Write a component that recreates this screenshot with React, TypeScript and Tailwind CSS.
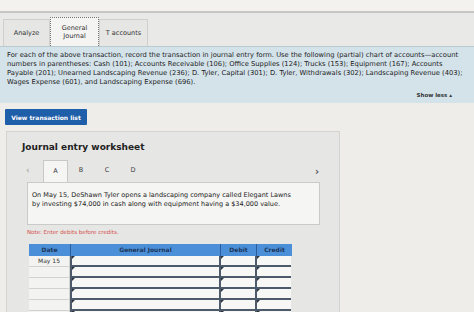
import React from "react";

const font = { fontFamily: '"DejaVu Sans", Verdana, sans-serif' };

function Row({ date }: { date?: string }) {
  return (
    <div className="flex h-[11px]">
      <div className="w-[41px] border-r border-b border-[#d2d2d0] bg-[#f3f3f1] text-center text-[6px] leading-[10px] text-[#333]">
        {date ?? ""}
      </div>
      {[149, 36, 36].map((w, i) => (
        <div
          key={i}
          className="relative border-l-2 border-b-2 border-[#4d5a6a] bg-[#f7f7f5]"
          style={{ width: w }}
        >
          <div className="absolute left-0 top-0 h-0 w-0 border-t-[3px] border-r-[3px] border-t-[#2a3440] border-r-transparent" />
        </div>
      ))}
    </div>
  );
}

export default function App() {
  return (
    <div className="relative h-[312px] w-[474px] overflow-hidden bg-[#eeede9] text-[#222]" style={font}>
      <div className="h-[13px] border-b-2 border-[#c6c6c4] bg-[#f3f2ef]" />
      <div className="flex h-[33px] items-end bg-[#e9e9e7] pl-[3px]">
        <div className="flex h-[27px] w-[47px] items-center justify-center border border-b-0 border-[#cfcfcd] bg-[#e6e6e4] pt-[2px] text-[6.5px] text-[#333]">
          Analyze
        </div>
        <div className="flex h-[29px] w-[49px] items-center justify-center border border-dotted border-b-0 border-[#777] bg-[#f4f4f2] text-center text-[6.5px] leading-[8px] text-[#333]">
          General<br />Journal
        </div>
        <div className="flex h-[27px] w-[49px] items-center justify-center border border-b-0 border-[#cfcfcd] bg-[#e6e6e4] pt-[2px] text-[6.5px] text-[#333]">
          T accounts
        </div>
      </div>
      <div className="h-[57px] border-t border-[#b9c9d2] bg-[#d4e3ea] px-[7px] pt-[4px]">
        <p className="whitespace-nowrap text-[6.75px] leading-[9px] text-[#222]">
          For each of the above transaction, record the transaction in journal entry form. Use the following (partial) chart of accounts—account<br />
          numbers in parentheses: Cash (101); Accounts Receivable (106); Office Supplies (124); Trucks (153); Equipment (167); Accounts<br />
          Payable (201); Unearned Landscaping Revenue (236); D. Tyler, Capital (301); D. Tyler, Withdrawals (302); Landscaping Revenue (403);<br />
          Wages Expense (601), and Landscaping Expense (696).
        </p>
        <div className="mt-[4px] flex justify-end pr-[15px] text-[5.5px] font-bold text-[#333]">
          Show less ▴
        </div>
      </div>
      <div className="pl-[5px] pt-[6px]">
        <div className="flex h-[16px] w-[82px] items-center justify-center rounded-[1px] bg-[#1f5ea8] text-[6px] font-bold text-white">
          View transaction list
        </div>
      </div>
      <div className="ml-[6px] mt-[6px] h-[200px] w-[334px] border border-[#d3d3d1] bg-[#e6e6e4]">
        <div className="pl-[15px] pt-[9px] text-[9px] font-bold leading-[12px] text-[#222]">
          Journal entry worksheet
        </div>
        <div className="mt-[7px] flex h-[22px] items-end">
          <div className="flex h-[22px] w-[36px] items-center pl-[19px] text-[9px] text-[#999]">‹</div>
          <div className="flex h-[22px] w-[25px] items-center justify-center border border-b-0 border-[#c8c8c6] bg-[#f5f5f3] text-[6.5px] text-[#333]">A</div>
          {["B", "C", "D"].map((t) => (
            <div key={t} className="flex h-[22px] w-[26px] items-center justify-center text-[6.5px] text-[#444]">{t}</div>
          ))}
          <div className="flex-1" />
          <div className="flex h-[22px] w-[24px] items-center text-[10px] font-bold text-[#555]">›</div>
        </div>
        <div className="ml-[20px] h-[43px] w-[293px] border border-[#cacac8] bg-[#f5f5f3] px-[4px] pt-[8px] text-[6.5px] leading-[9px] text-[#222]">
          On May 15, DeShawn Tyler opens a landscaping company called Elegant Lawns<br />
          by investing $74,000 in cash along with equipment having a $34,000 value.
        </div>
        <div className="ml-[20px] mt-[3px] text-[5.5px] leading-[8px] text-[#d4524e]">
          Note: Enter debits before credits.
        </div>
        <div className="ml-[22px] mt-[8px] w-[263px]">
          <div className="flex h-[12px] bg-[#4a8fd8] text-[6px] font-bold leading-[12px] text-[#1d3558]">
            <div className="w-[41px] text-center">Date</div>
            <div className="w-[150px] border-l border-[#2b5e9a] text-center">General Journal</div>
            <div className="w-[36px] border-l border-[#2b5e9a] text-center">Debit</div>
            <div className="w-[36px] border-l border-[#2b5e9a] text-center">Credit</div>
          </div>
          <Row date="May 15" />
          <Row />
          <Row />
          <Row />
          <Row />
          <Row />
        </div>
      </div>
    </div>
  );
}
